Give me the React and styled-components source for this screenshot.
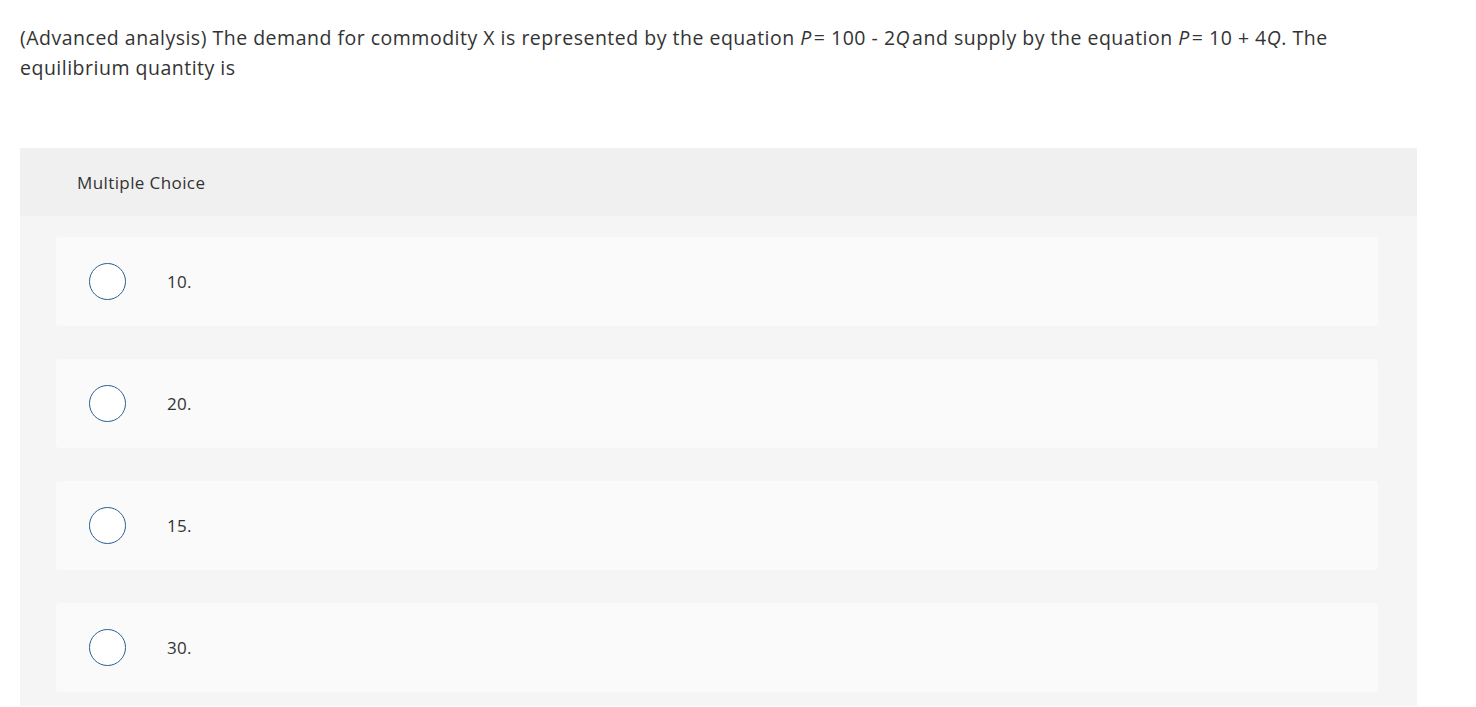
import React from 'react';
import styled, { createGlobalStyle } from 'styled-components';

const GlobalStyle = createGlobalStyle`
	body {
		margin: 0;
		background: #fff;
		font-family: 'Open Sans', 'Liberation Sans', sans-serif;
		color: #333;
	}
`;

const Page = styled.div`
	padding: 23px 59px 0 20px;
`;

const Question = styled.p`
	margin: 0;
	font-size: 19.5px;
	line-height: 30px;
	color: #333;
	letter-spacing: 0.5px;
`;

const Var = styled.i`
	font-style: italic;
	margin-right: ${(p) => (p.$tight ? '0' : '2px')};
`;

const Panel = styled.section`
	margin-top: 65px;
	background: #f5f5f5;
	padding-bottom: 14px;
`;

const PanelHeader = styled.header`
	height: 68px;
	display: flex;
	align-items: center;
	padding-left: 57px;
	background: #f0f0f0;
	font-size: 17px;
	letter-spacing: 0.4px;
	color: #333;
`;

const Options = styled.div`
	display: flex;
	flex-direction: column;
	gap: 33px;
	padding: 21px 39px 0 36px;
`;

const Option = styled.label`
	display: flex;
	align-items: center;
	height: 89px;
	padding-left: 33px;
	background: #fafafa;
	border-radius: 4px;
	cursor: pointer;
`;

const Radio = styled.span`
	width: 37px;
	height: 37px;
	box-sizing: border-box;
	border: 1.5px solid #2b5f94;
	border-radius: 50%;
	background: #fff;
	flex-shrink: 0;
`;

const OptionText = styled.span`
	margin-left: 41px;
	font-size: 17px;
	letter-spacing: 0.3px;
	color: #333;
`;

const choices = ['10.', '20.', '15.', '30.'];

export default function App() {
	return (
		<Page>
			<GlobalStyle />
			<Question>
				(Advanced analysis) The demand for commodity X is represented by the equation <Var>P</Var>= 100 - 2<Var>Q</Var>and supply by the equation <Var>P</Var>= 10 + 4<Var $tight>Q</Var>. The equilibrium quantity is
			</Question>
			<Panel>
				<PanelHeader>Multiple Choice</PanelHeader>
				<Options>
					{choices.map((c) => (
						<Option key={c}>
							<Radio />
							<OptionText>{c}</OptionText>
						</Option>
					))}
				</Options>
			</Panel>
		</Page>
	);
}
